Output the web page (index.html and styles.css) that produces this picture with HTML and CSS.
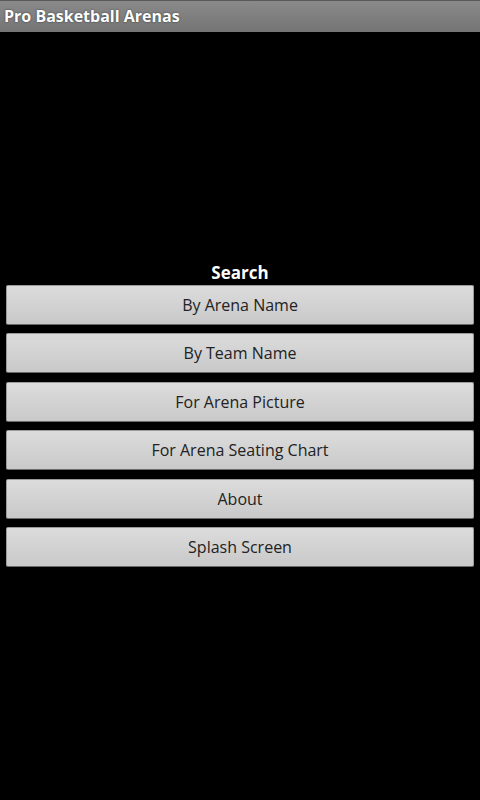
FILE: index.html
```html
<!DOCTYPE html>
<html lang="en">
<head>
    <meta charset="UTF-8">
    <meta name="viewport" content="width=device-width, initial-scale=1.0">
    <title>Pro Basketball Arenas</title>
    <link rel="stylesheet" href="styles.css">
</head>
<body>
    <div class="title-bar">Pro Basketball Arenas</div>
    <div class="content">
        <div class="menu">
            <h2>Search</h2>
            <button>By Arena Name</button>
            <button>By Team Name</button>
            <button>For Arena Picture</button>
            <button>For Arena Seating Chart</button>
            <button>About</button>
            <button>Splash Screen</button>
        </div>
    </div>
</body>
</html>
```

FILE: styles.css
```css
* {
    margin: 0;
    padding: 0;
    box-sizing: border-box;
}
body {
    font-family: "Open Sans", "DejaVu Sans", sans-serif;
    background-color: #000;
    width: 480px;
    height: 800px;
    display: flex;
    flex-direction: column;
}
.title-bar {
    height: 32px;
    background: linear-gradient(#8a8a8a, #747474);
    border-top: 1px solid #5a5a5a;
    color: #fff;
    font-weight: bold;
    font-size: 16px;
    line-height: 30px;
    padding-left: 4px;
    text-shadow: 0 0 2px rgba(0, 0, 0, 0.6);
}
.content {
    flex: 1;
    display: flex;
    align-items: center;
    padding: 0 6px 2px;
}
.menu {
    width: 100%;
    display: flex;
    flex-direction: column;
}
h2 {
    color: #fff;
    font-size: 17px;
    font-weight: bold;
    text-align: center;
    line-height: 20px;
    margin-bottom: 2px;
}
button {
    height: 40px;
    margin-bottom: 8.6px;
    font-family: inherit;
    font-size: 16px;
    color: #222;
    background: linear-gradient(#dcdcdc, #c9c9c9);
    border: 1px solid #9a9a9a;
    border-bottom-color: #6a6a6a;
    border-radius: 2px;
}
button:last-child {
    margin-bottom: 0;
}
```
